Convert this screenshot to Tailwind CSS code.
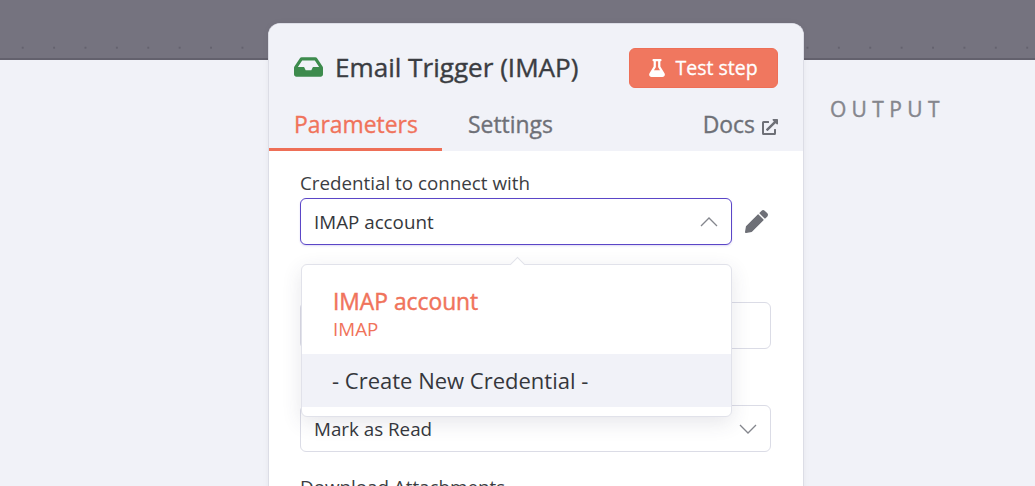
<!DOCTYPE html>
<html>
<head>
<meta charset="utf-8">
<script src="https://cdn.jsdelivr.net/npm/@tailwindcss/browser@4"></script>
</head>
<body class="m-0 w-[1035px] h-[486px] overflow-hidden bg-[#f1f2f8] font-['Open_Sans',sans-serif]">
<div class="relative w-[1035px] h-[486px] overflow-hidden">
  <div class="h-[60px] bg-[#75737f] border-b-2 border-[#63616d] bg-[radial-gradient(#64626e_1px,transparent_1.2px)] bg-[length:31.4px_31.4px] bg-[position:7px_32px] bg-repeat-x"></div>
  <div class="flex justify-end pr-[90px] pt-[35px]">
    <span class="text-[21px] leading-[28px] [-webkit-text-stroke:0.4px] tracking-[5.4px] text-[#85868d]">OUTPUT</span>
  </div>

  <div class="absolute left-[268px] top-[23px] w-[536px] h-[480px] rounded-t-[12px] bg-white border border-[#dcdde6] border-b-0 shadow-[0_0_6px_rgba(0,0,0,0.05)] overflow-hidden">
    <div class="h-[127px] bg-[#f1f2f8]">
      <div class="flex items-center justify-between pl-[25px] pr-[25px] pt-[24px] h-[64px]">
        <div class="flex items-center gap-[12px] -mt-[2px]">
          <svg width="29" height="26" viewBox="0 0 576 512" class="block -mt-[1px]">
            <path fill="#3d8b4d" d="M567.938 243.908L462.25 85.374A48.003 48.003 0 0 0 422.311 64H153.689a48 48 0 0 0-39.938 21.374L8.062 243.908A47.994 47.994 0 0 0 0 270.533V400c0 26.510 21.490 48 48 48h480c26.510 0 48-21.490 48-48V270.533a47.994 47.994 0 0 0-8.062-26.625zM162.252 128h251.497l85.333 128H376l-32 64H232l-32-64H76.918l85.334-128z"/>
          </svg>
          <span class="text-[26.100px] leading-[32px] [-webkit-text-stroke:0.4px] text-[#3b3d42]">Email Trigger (IMAP)</span>
        </div>
        <div class="flex items-center justify-center gap-[10px] w-[149px] h-[40px] rounded-[6px] bg-[#f0775f] border border-[#ee6f57] text-white">
          <svg width="16" height="18" viewBox="0 0 448 512" class="block">
            <path fill="#fff" d="M437.2 403.5L320 215V64h8c13.3 0 24-10.700 24-24V24c0-13.300-10.700-24-24-24H120c-13.300 0-24 10.700-24 24v16c0 13.300 10.700 24 24 24h8v151L10.800 403.500C-18.500 450.600 15.300 512 70.900 512h306.200c55.700 0 89.400-61.500 60.100-108.500zM137.900 320l48.200-77.600c3.700-5.200 5.800-11.600 5.800-18.400V64h64v160c0 6.900 2.200 13.200 5.800 18.400l48.200 77.600h-172z"/>
          </svg>
          <span class="text-[19.500px] leading-[24px] [-webkit-text-stroke:0.3px]">Test step</span>
        </div>
      </div>
      <div class="flex items-start h-[63px] pr-[25px] pt-[22px]">
        <div class="w-[173px] h-[41px] pl-[25px] border-b-[3px] border-[#ee6f57] text-[22.900px] leading-[30px] [-webkit-text-stroke:0.35px] text-[#f0735b]">Parameters</div>
        <div class="ml-[26px] text-[22.900px] leading-[30px] [-webkit-text-stroke:0.35px] text-[#6e7077]">Settings</div>
        <div class="ml-auto flex items-start gap-[7px]">
          <span class="text-[22.900px] leading-[30px] [-webkit-text-stroke:0.35px] text-[#6e7077]">Docs</span>
          <svg width="16" height="16" viewBox="0 0 512 512" class="block mt-[9px]">
            <path fill="#6e7077" d="M432,320H400a16,16,0,0,0-16,16V448H64V128H208a16,16,0,0,0,16-16V80a16,16,0,0,0-16-16H48A48,48,0,0,0,0,112V464a48,48,0,0,0,48,48H400a48,48,0,0,0,48-48V336A16,16,0,0,0,432,320ZM488,0h-128c-21.370,0-32.050,25.910-17,41l35.730,35.730L135,320.370a24,24,0,0,0,0,34L157.670,377a24,24,0,0,0,34,0L435.280,133.320,471,169c15,15,41,4.500,41-17V24A24,24,0,0,0,488,0Z"/>
          </svg>
        </div>
      </div>
    </div>

    <div class="pl-[31px] pr-[31px] pt-[20px]">
      <div class="text-[18.800px] leading-[24px] text-[#3b3d42] h-[24px]">Credential to connect with</div>
      <div class="flex items-center gap-[13px] mt-[3px]">
        <div class="w-[432px] h-[47px] flex items-center justify-between pl-[13px] pr-[13px] rounded-[6px] bg-white border border-[#5b46c7] shadow-[0_1px_2px_rgba(91,70,199,0.2)]">
          <span class="text-[18.800px] leading-[24px] text-[#35373c]">IMAP account</span>
          <svg width="18" height="10" viewBox="0 0 18 10" fill="none" stroke="#84868d" stroke-width="1.300"><path d="M1 9 9 1l8 8"/></svg>
        </div>
        <svg width="23" height="23" viewBox="0 0 512 512" class="block"><path fill="#6e7077" d="M497.9 142.1l-46.100 46.100c-4.700 4.700-12.300 4.700-17 0l-111-111c-4.700-4.700-4.700-12.300 0-17l46.100-46.100c18.700-18.700 49.100-18.700 67.900 0l60.100 60.100c18.800 18.700 18.800 49.100 0 67.900zM284.200 99.800L21.600 362.400.4 483.900c-2.900 16.400 11.400 30.600 27.800 27.800l121.500-21.300 262.600-262.600c4.700-4.700 4.700-12.300 0-17l-111-111c-4.800-4.700-12.400-4.700-17.100 0z"/></svg>
      </div>
      <div class="mt-[57px] w-[471px] h-[47px] rounded-[6px] bg-white border border-[#dbdce6]"></div>
      <div class="mt-[56px] w-[471px] h-[47px] flex items-center justify-between pl-[13px] pr-[13px] rounded-[6px] bg-white border border-[#dbdce6]">
        <span class="text-[18.800px] leading-[24px] text-[#35373c]">Mark as Read</span>
        <svg width="18" height="10" viewBox="0 0 18 10" fill="none" stroke="#84868d" stroke-width="1.300"><path d="M1 1l8 8 8-8"/></svg>
      </div>
      <div class="mt-[23px] text-[18.800px] leading-[24px] text-[#3b3d42]">Download Attachments</div>
    </div>
  </div>

  <div class="absolute left-[301px] top-[264px] w-[431px] h-[153px] rounded-[6px] bg-white border border-[#e1e2ea] shadow-[0_6px_20px_rgba(60,60,90,0.12)]">
    <div class="absolute left-[210px] top-[-6px] w-[11px] h-[11px] rotate-45 bg-white border-l border-t border-[#e1e2ea]"></div>
    <div class="h-[89px] pl-[31px] pt-[21px]">
      <div class="text-[22.800px] leading-[32px] [-webkit-text-stroke:0.45px] text-[#f0735b] h-[31px]">IMAP account</div>
      <div class="text-[18.800px] leading-[24px] text-[#f0735b]">IMAP</div>
    </div>
    <div class="h-[53px] flex items-center pl-[30px] pb-[2px] bg-[#f1f2f8] text-[22px] leading-[28px] text-[#35373c]">- Create New Credential -</div>
  </div>
</div>
</body>
</html>
